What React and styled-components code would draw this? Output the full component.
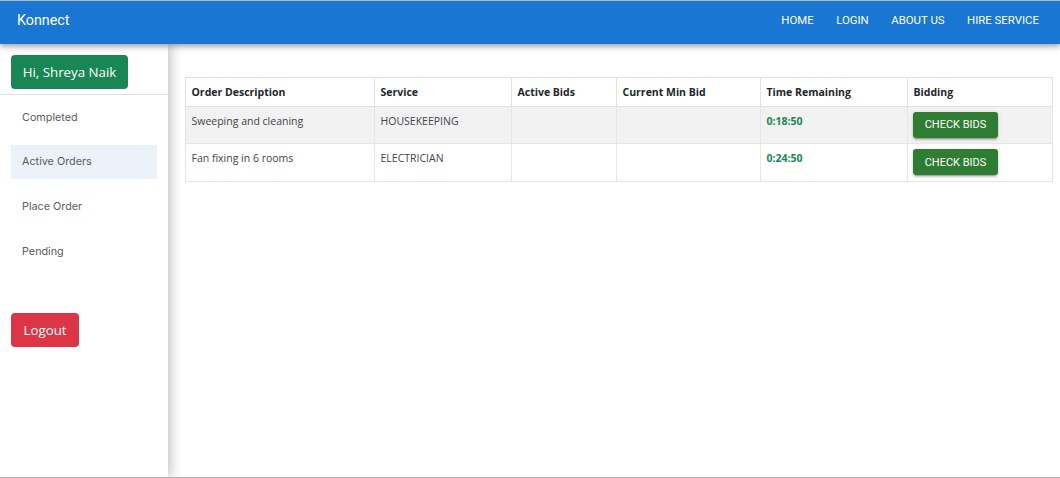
import React from "react";
import styled, { createGlobalStyle } from "styled-components";

const Global = createGlobalStyle`
  html, body { margin: 0; padding: 0; height: 100%; background: #fff; overflow: hidden; }
  #root { height: 100%; }
  * { box-sizing: border-box; }
`;

const Page = styled.div`
  width: 1060px;
  height: 478px;
  display: flex;
  flex-direction: column;
  border-top: 1px solid #b4b4b4;
  border-bottom: 1px solid #b4b4b4;
  overflow: hidden;
`;

const Navbar = styled.header`
  height: 43px;
  flex: none;
  background: #1976d2;
  box-shadow: 0 2px 4px -1px rgba(0,0,0,.2), 0 4px 5px 0 rgba(0,0,0,.14), 0 1px 10px 0 rgba(0,0,0,.12);
  display: flex;
  align-items: center;
  justify-content: space-between;
  padding: 0 21px 5px 17px;
  position: relative;
  z-index: 2;
  color: #fff;
`;

const Brand = styled.div`
  font: 400 14.3px "Roboto", "Liberation Sans", sans-serif;
`;

const NavLinks = styled.nav`
  display: flex;
  gap: 22.5px;
`;

const NavLink = styled.a`
  font: 400 11.4px "Roboto", "Liberation Sans", sans-serif;
  text-transform: uppercase;
  color: #fff;
`;

const Body = styled.div`
  flex: 1;
  display: flex;
  min-height: 0;
`;

const Sidebar = styled.aside`
  width: 168px;
  flex: none;
  background: #fff;
  box-shadow: 2px 0 12px rgba(0,0,0,.28);
  padding-top: 11px;
  position: relative;
  z-index: 1;
`;

const Greeting = styled.div`
  width: 117px;
  height: 34px;
  margin-left: 11px;
  background: #198754;
  border-radius: 4px;
  color: #fff;
  font: 400 13.3px "Open Sans", "Noto Sans", sans-serif;
  display: flex;
  align-items: center;
  justify-content: center;
`;

const Divider = styled.div`
  height: 1px;
  background: #dedede;
  margin-top: 5px;
`;

const Menu = styled.ul`
  list-style: none;
  margin: 5px 0 0;
  padding: 0 11px;
  display: flex;
  flex-direction: column;
  gap: 10.8px;
`;

const MenuItem = styled.li`
  height: 34px;
  padding-left: 11px;
  display: flex;
  align-items: center;
  font: 400 10.8px "Inter", "Roboto", sans-serif;
  color: #5c5c5c;
  background: ${(p) => (p.$active ? "#ebf2fa" : "transparent")};
`;

const Logout = styled.button`
  display: block;
  width: 68px;
  height: 34px;
  margin: 45px 0 0 11px;
  border: none;
  border-radius: 4px;
  background: #dc3545;
  color: #fff;
  font: 400 13.3px "Open Sans", "Noto Sans", sans-serif;
  padding: 0;
`;

const Main = styled.main`
  flex: 1;
  padding: 33px 7px 0 17px;
`;

const Table = styled.table`
  width: 867px;
  border-collapse: collapse;
  table-layout: fixed;
  font: 400 10.5px "Open Sans", "Noto Sans", sans-serif;
  color: #212529;
`;

const HeadCell = styled.th`
  height: 28.5px;
  padding: 0 5.5px;
  text-align: left;
  font-weight: 700;
  border: 1px solid #dee2e6;
`;

const Row = styled.tr`
  background: ${(p) => (p.$shaded ? "#f2f2f2" : "#fff")};
`;

const Cell = styled.td`
  height: 37.5px;
  padding: 7px 5.5px 0;
  vertical-align: top;
  border: 1px solid #e4e7ea;
  color: #40454a;
`;

const Timer = styled(Cell)`
  color: #198754;
  font-weight: 700;
`;

const ButtonCell = styled(Cell)`
  padding: 5px 5px 0;
`;

const BidButton = styled.button`
  display: block;
  width: 85px;
  height: 26px;
  padding: 0;
  border: none;
  border-radius: 3px;
  background: #2e7d32;
  color: #fff;
  font: 400 11px "Roboto", "Liberation Sans", sans-serif;
  text-transform: uppercase;
  box-shadow: 0 3px 1px -2px rgba(0,0,0,.2), 0 2px 2px 0 rgba(0,0,0,.14), 0 1px 5px 0 rgba(0,0,0,.12);
`;

const columns = [
  ["Order Description", 189],
  ["Service", 137],
  ["Active Bids", 105],
  ["Current Min Bid", 144],
  ["Time Remaining", 147],
  ["Bidding", 145],
];

const orders = [
  { description: "Sweeping and cleaning", service: "HOUSEKEEPING", time: "0:18:50" },
  { description: "Fan fixing in 6 rooms", service: "ELECTRICIAN", time: "0:24:50" },
];

export default function App() {
  return (
    <Page>
      <Global />
      <Navbar>
        <Brand>Konnect</Brand>
        <NavLinks>
          {["Home", "Login", "About Us", "Hire Service"].map((l) => (
            <NavLink key={l}>{l}</NavLink>
          ))}
        </NavLinks>
      </Navbar>
      <Body>
        <Sidebar>
          <Greeting>Hi, Shreya Naik</Greeting>
          <Divider />
          <Menu>
            <MenuItem>Completed</MenuItem>
            <MenuItem $active>Active Orders</MenuItem>
            <MenuItem>Place Order</MenuItem>
            <MenuItem>Pending</MenuItem>
          </Menu>
          <Logout>Logout</Logout>
        </Sidebar>
        <Main>
          <Table>
            <colgroup>
              {columns.map(([name, width]) => (
                <col key={name} width={width} />
              ))}
            </colgroup>
            <thead>
              <tr>
                {columns.map(([name]) => (
                  <HeadCell key={name}>{name}</HeadCell>
                ))}
              </tr>
            </thead>
            <tbody>
              {orders.map((o, i) => (
                <Row key={o.service} $shaded={i === 0}>
                  <Cell>{o.description}</Cell>
                  <Cell>{o.service}</Cell>
                  <Cell />
                  <Cell />
                  <Timer>{o.time}</Timer>
                  <ButtonCell>
                    <BidButton>Check Bids</BidButton>
                  </ButtonCell>
                </Row>
              ))}
            </tbody>
          </Table>
        </Main>
      </Body>
    </Page>
  );
}
